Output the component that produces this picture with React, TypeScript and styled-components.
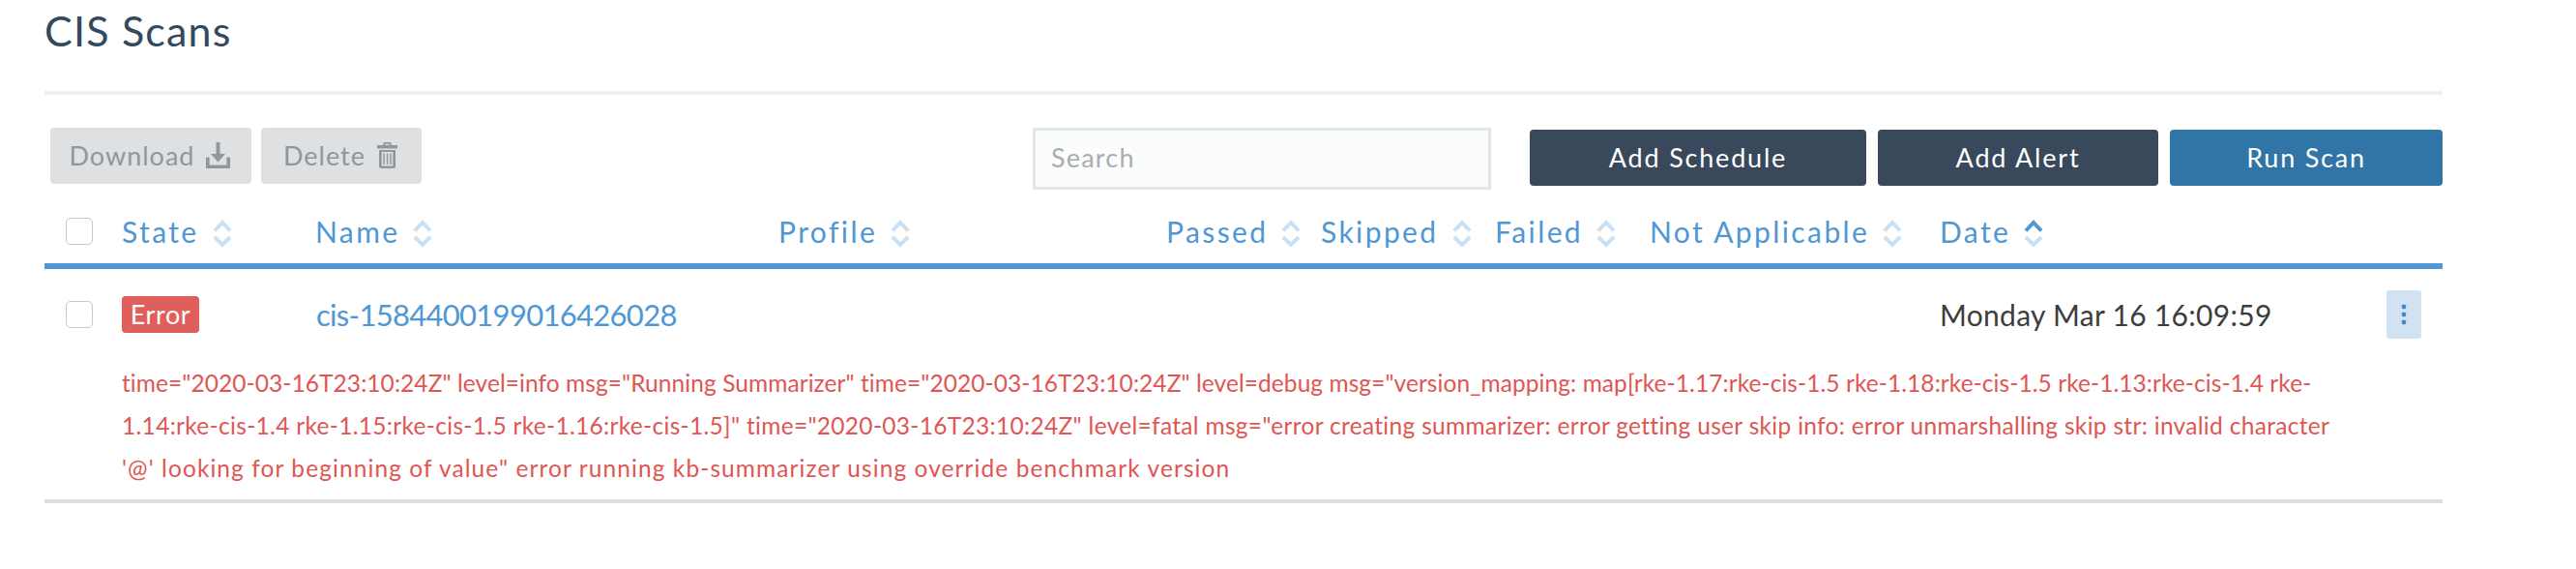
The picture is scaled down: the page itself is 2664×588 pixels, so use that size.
import React from 'react';
import styled, { createGlobalStyle } from 'styled-components';

const GlobalStyle = createGlobalStyle`
  html, body {
    margin: 0;
    padding: 0;
    background: #fff;
  }
  body {
    font-family: Lato, "Open Sans", sans-serif;
    font-weight: 400;
  }
  * {
    box-sizing: border-box;
  }
`;

const columns = '80px 200px 479px 401px 160px 180px 160px 300px 1fr';

const headers = [
  { label: 'State' },
  { label: 'Name' },
  { label: 'Profile' },
  { label: 'Passed' },
  { label: 'Skipped' },
  { label: 'Failed' },
  { label: 'Not Applicable' },
  { label: 'Date', active: true },
];

const messageLines = [
  {
    spacing: 0.07,
    text: 'time="2020-03-16T23:10:24Z" level=info msg="Running Summarizer" time="2020-03-16T23:10:24Z" level=debug msg="version_mapping: map[rke-1.17:rke-cis-1.5 rke-1.18:rke-cis-1.5 rke-1.13:rke-cis-1.4 rke-',
  },
  {
    spacing: 0.31,
    text: '1.14:rke-cis-1.4 rke-1.15:rke-cis-1.5 rke-1.16:rke-cis-1.5]" time="2020-03-16T23:10:24Z" level=fatal msg="error creating summarizer: error getting user skip info: error unmarshalling skip str: invalid character',
  },
  {
    spacing: 1.08,
    text: '\'@\' looking for beginning of value" error running kb-summarizer using override benchmark version',
  },
];

function SortIcon({ active }: { active?: boolean }) {
  return (
    <SortSvg viewBox="0 0 20 29" fill="none" strokeWidth="4">
      <path d="M2 11.5 L10 3 L18 11.5" stroke={active ? '#4f97d5' : '#cbe0f3'} />
      <path d="M2 18 L10 26 L18 18" stroke="#cbe0f3" />
    </SortSvg>
  );
}

function DownloadIcon() {
  return (
    <ButtonIcon width="25" height="27" viewBox="0 0 25 27" fill="#8e979e">
      <path d="M10.5 0h4v12h5.5l-7.5 8.5L5 12h5.5z" />
      <path d="M0 15.5h3.6v7.9h17.8v-7.9H25V27H0z" />
    </ButtonIcon>
  );
}

function TrashIcon() {
  return (
    <ButtonIcon width="21" height="27" viewBox="0 0 21 27" fill="#8e979e">
      <path d="M7 0h7l1 3h6v3.4H0V3h6zM8.4 1.7 8 3h5l-.4-1.3z" />
      <path
        fillRule="evenodd"
        d="M2 8h17v16.5a2.5 2.5 0 0 1-2.5 2.5h-12A2.5 2.5 0 0 1 2 24.5zM4.7 10v14.4h11.6V10zM6.3 11.5h1.5v11.4H6.3zM9.8 11.5h1.5v11.4H9.8zM13.2 11.5h1.5v11.4h-1.5z"
      />
    </ButtonIcon>
  );
}

export default function App() {
  return (
    <Page>
      <GlobalStyle />
      <PageHeader>
        <Title>CIS Scans</Title>
      </PageHeader>
      <Toolbar>
        <BulkActions>
          <BulkButton $width={208}>
            Download <DownloadIcon />
          </BulkButton>
          <BulkButton $width={166}>
            Delete <TrashIcon />
          </BulkButton>
        </BulkActions>
        <SearchInput placeholder="Search" />
        <PrimaryActions>
          <ActionButton $width={348}>Add Schedule</ActionButton>
          <ActionButton $width={290}>Add Alert</ActionButton>
          <ActionButton $width={282} $primary>
            Run Scan
          </ActionButton>
        </PrimaryActions>
      </Toolbar>
      <HeaderRow>
        <CheckCell>
          <Checkbox />
        </CheckCell>
        {headers.map((h) => (
          <HeaderCell key={h.label}>
            {h.label}
            <SortIcon active={h.active} />
          </HeaderCell>
        ))}
      </HeaderRow>
      <ScanRow>
        <CheckCell>
          <Checkbox />
        </CheckCell>
        <div>
          <Badge>Error</Badge>
        </div>
        <ScanName>cis-1584400199016426028</ScanName>
        <DateCell>
          Monday Mar 16 16:09:59
          <MenuButton>
            <svg width="6" height="22" viewBox="0 0 6 22" fill="#3f88cc">
              <circle cx="3" cy="3" r="2.4" />
              <circle cx="3" cy="11" r="2.4" />
              <circle cx="3" cy="19" r="2.4" />
            </svg>
          </MenuButton>
        </DateCell>
      </ScanRow>
      <ErrorMessage>
        {messageLines.map((line) => (
          <ErrorLine key={line.spacing} $spacing={line.spacing}>
            {line.text}
          </ErrorLine>
        ))}
      </ErrorMessage>
    </Page>
  );
}

const Page = styled.div`
  width: 2664px;
  height: 588px;
  padding: 0 138px 0 46px;
  overflow: hidden;
`;

const PageHeader = styled.header`
  height: 98px;
  padding-top: 8px;
  border-bottom: 4px solid #edf1f2;
`;

const Title = styled.h1`
  margin: 0;
  font-size: 43px;
  line-height: 48px;
  font-weight: 400;
  letter-spacing: 1.2px;
  color: #34495e;
`;

const Toolbar = styled.div`
  display: flex;
  align-items: flex-start;
  margin-top: 34px;
  height: 64px;
`;

const BulkActions = styled.div`
  display: flex;
  gap: 10px;
  margin-left: 6px;
`;

const BulkButton = styled.button<{ $width: number }>`
  display: flex;
  align-items: center;
  justify-content: center;
  gap: 12px;
  width: ${(p) => p.$width}px;
  height: 58px;
  padding: 0 2px 2px 0;
  border: 0;
  border-radius: 4px;
  background: #dfe0e2;
  color: #8e979e;
  font-family: inherit;
  font-size: 27px;
  letter-spacing: 1px;
`;

const ButtonIcon = styled.svg`
  flex: none;
`;

const SearchInput = styled.input`
  width: 474px;
  height: 64px;
  margin-left: auto;
  padding: 0 16px 3px;
  border: 3px solid #dfe6eb;
  background: #fbfcfc;
  font-family: inherit;
  font-size: 27px;
  letter-spacing: 1.2px;
  outline: none;

  &::placeholder {
    color: #a9adb0;
    opacity: 1;
  }
`;

const PrimaryActions = styled.div`
  display: flex;
  gap: 12px;
  margin: 2px 0 0 40px;
`;

const ActionButton = styled.button<{ $width: number; $primary?: boolean }>`
  width: ${(p) => p.$width}px;
  height: 58px;
  padding: 0 0 2px;
  border: 0;
  border-radius: 4px;
  background: ${(p) => (p.$primary ? '#3174a6' : '#39495b')};
  color: #fff;
  font-family: inherit;
  font-size: 27px;
  letter-spacing: 1.8px;
`;

const HeaderRow = styled.div`
  display: grid;
  grid-template-columns: ${columns};
  align-items: center;
  height: 82px;
  padding-top: 10px;
  border-bottom: 6px solid #4f97d5;
`;

const CheckCell = styled.div`
  padding-left: 22px;
  display: flex;
  align-items: center;
`;

const Checkbox = styled.span`
  display: block;
  width: 28px;
  height: 28px;
  border: 1.5px solid #c6c8ca;
  border-radius: 5px;
  background: #fff;
`;

const HeaderCell = styled.div`
  display: flex;
  align-items: center;
  gap: 14px;
  white-space: nowrap;
  color: #4f97d5;
  font-size: 30px;
  letter-spacing: 2.4px;
`;

const SortSvg = styled.svg`
  flex: none;
  width: 20px;
  height: 29px;
  margin-top: 4px;
`;

const ScanRow = styled.div`
  display: grid;
  grid-template-columns: 80px 201px 1679px 1fr;
  align-items: center;
  margin-top: 22px;
  height: 50px;
`;

const Badge = styled.span`
  display: inline-block;
  width: 80px;
  height: 38px;
  border-radius: 4px;
  background: #e05e5c;
  color: #fff;
  font-size: 27px;
  line-height: 38px;
  text-align: center;
  letter-spacing: 0.6px;
`;

const ScanName = styled.a`
  color: #4f97d5;
  font-size: 31px;
  letter-spacing: -0.7px;
`;

const DateCell = styled.div`
  display: flex;
  align-items: center;
  justify-content: space-between;
  padding-right: 22px;
  color: #3d3d3d;
  font-size: 30px;
  letter-spacing: 0.3px;
  white-space: nowrap;
`;

const MenuButton = styled.button`
  display: flex;
  align-items: center;
  justify-content: center;
  width: 36px;
  height: 50px;
  padding: 0;
  border: 0;
  border-radius: 3px;
  background: #d1e2f2;
`;

const ErrorMessage = styled.div`
  margin-top: 24px;
  padding: 0 0 10px 80px;
  border-bottom: 4px solid #dcdee0;
  color: #e05654;
  font-size: 24.5px;
  line-height: 44px;
`;

const ErrorLine = styled.span<{ $spacing: number }>`
  display: block;
  white-space: nowrap;
  letter-spacing: ${(p) => p.$spacing}px;
`;
